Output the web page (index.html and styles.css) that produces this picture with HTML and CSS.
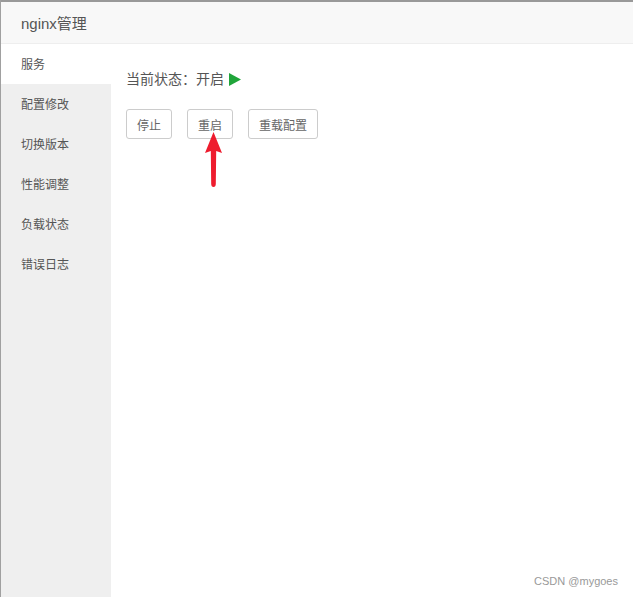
FILE: index.html
```html
<!DOCTYPE html>
<html lang="zh-CN">
<head>
  <meta charset="UTF-8">
  <title>nginx管理</title>
  <link rel="stylesheet" href="styles.css">
</head>
<body>
  <div class="panel">
    <div class="panel-title">nginx管理</div>
    <div class="panel-body">
      <ul class="side-menu">
        <li class="active">服务</li>
        <li>配置修改</li>
        <li>切换版本</li>
        <li>性能调整</li>
        <li>负载状态</li>
        <li>错误日志</li>
      </ul>
      <div class="content">
        <p class="status">当前状态：开启
          <svg class="play-icon" width="12" height="13" viewBox="0 0 12 13"><polygon points="0,0 12,6.5 0,13" fill="#20a53a"/></svg>
        </p>
        <div class="actions">
          <button class="btn">停止</button>
          <button class="btn">重启</button>
          <button class="btn">重载配置</button>
        </div>
      </div>
    </div>
  </div>

  <!-- annotation on top of the screenshot -->
  <svg class="arrow" width="20" height="56" viewBox="0 0 20 56">
    <path d="M9.5 0 L18 21 L12.2 19 L11.8 52 Q11.7 55 9.5 55 Q7.3 55 7.2 52 L6.8 19 L1 21 Z" fill="#ee1c2e"/>
  </svg>
  <div class="watermark">CSDN @mygoes</div>
</body>
</html>
```

FILE: styles.css
```css
/* General Reset */
* {
  margin: 0;
  padding: 0;
  box-sizing: border-box;
}

html, body {
  height: 100%;
  overflow: hidden;
}

body {
  font-family: "Liberation Sans", "Noto Sans CJK SC", sans-serif;
  font-size: 12px;
  color: #555;
  background: #fff;
  padding: 2px 0 0 1px;
  position: relative;
}

/* screenshot edge: window behind the dialog */
body::before {
  content: "";
  position: absolute;
  left: 0;
  top: 0;
  right: 0;
  height: 2px;
  background: #999;
}

body::after {
  content: "";
  position: absolute;
  left: 0;
  top: 0;
  bottom: 0;
  width: 1px;
  background: #a0a0a0;
}

.panel {
  height: 100%;
  display: flex;
  flex-direction: column;
}

.panel-title {
  height: 42px;
  line-height: 43px;
  padding-left: 20px;
  font-size: 15px;
  color: #555;
  background: #f8f8f8;
  border-bottom: 1px solid #eee;
}

.panel-body {
  flex: 1;
  display: flex;
}

/* Side menu */
.side-menu {
  width: 110px;
  background: #efefef;
  list-style: none;
}

.side-menu li {
  height: 40px;
  line-height: 42px;
  padding-left: 20px;
  color: #555;
}

.side-menu li.active {
  background: #fff;
}

.content {
  flex: 1;
  padding: 26px 15px 0;
}

.status {
  height: 18px;
  line-height: 18px;
  font-size: 14px;
  color: #555;
  display: flex;
  align-items: center;
  gap: 5px;
}

.play-icon {
  display: block;
}

.actions {
  display: flex;
  gap: 15px;
  margin-top: 21px;
}

.btn {
  height: 30px;
  padding: 0 10px;
  font-family: inherit;
  font-size: 12px;
  color: #666;
  background: #fff;
  border: 1px solid #ccc;
  border-radius: 3px;
}

.arrow {
  position: absolute;
  left: 204px;
  top: 132px;
}

.watermark {
  position: absolute;
  right: 15px;
  top: 575px;
  font-size: 11px;
  color: #999;
}
```
